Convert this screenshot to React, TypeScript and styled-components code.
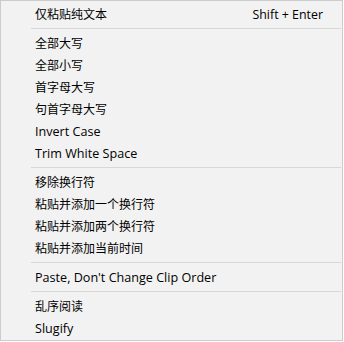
import { createGlobalStyle, styled } from 'styled-components';

const GlobalStyle = createGlobalStyle`
  html, body {
    margin: 0;
    padding: 0;
    background: #ffffff;
  }
  body {
    font-family: "Open Sans", "Noto Sans CJK SC", sans-serif;
  }
`;

type Entry =
  | { kind: 'item'; label: string; shortcut?: string; latin?: boolean }
  | { kind: 'sep' };

const menuData: Entry[] = [
  { kind: 'item', label: '仅粘贴纯文本', shortcut: 'Shift + Enter' },
  { kind: 'sep' },
  { kind: 'item', label: '全部大写' },
  { kind: 'item', label: '全部小写' },
  { kind: 'item', label: '首字母大写' },
  { kind: 'item', label: '句首字母大写' },
  { kind: 'item', label: 'Invert Case', latin: true },
  { kind: 'item', label: 'Trim White Space', latin: true },
  { kind: 'sep' },
  { kind: 'item', label: '移除换行符' },
  { kind: 'item', label: '粘贴并添加一个换行符' },
  { kind: 'item', label: '粘贴并添加两个换行符' },
  { kind: 'item', label: '粘贴并添加当前时间' },
  { kind: 'sep' },
  { kind: 'item', label: "Paste, Don't Change Clip Order", latin: true },
  { kind: 'sep' },
  { kind: 'item', label: '乱序阅读' },
  { kind: 'item', label: 'Slugify', latin: true },
];

export default function App() {
  return (
    <>
      <GlobalStyle />
      <Styled.Menu>
        {menuData.map((entry, i) =>
          entry.kind === 'sep' ? (
            <Styled.Separator key={i} />
          ) : (
            <Styled.Item key={i}>
              <Styled.Label $latin={entry.latin}>{entry.label}</Styled.Label>
              {entry.shortcut && <Styled.Shortcut>{entry.shortcut}</Styled.Shortcut>}
            </Styled.Item>
          )
        )}
      </Styled.Menu>
    </>
  );
}

const Styled = {
  Menu: styled.div`
    box-sizing: border-box;
    width: 343px;
    height: 341px;
    border: 1px solid #cccccc;
    background: #f2f2f2;
    padding: 2px 0 0 0;
    display: flex;
    flex-direction: column;
  `,
  Item: styled.div`
    height: 22px;
    display: flex;
    align-items: center;
    padding: 0 19px 0 34px;
    font-size: 12px;
    color: #000000;
  `,
  Label: styled.span<{ $latin?: boolean }>`
    flex: 1;
    white-space: nowrap;
    font-size: ${p => (p.$latin ? '12.6px' : '12px')};
  `,
  Shortcut: styled.span`
    white-space: nowrap;
    font-size: 12.4px;
  `,
  Separator: styled.div`
    height: 7px;
    margin-left: 30px;
    margin-right: 1px;
    display: flex;
    align-items: center;
    &::after {
      content: '';
      display: block;
      width: 100%;
      height: 1px;
      background: #d7d7d7;
    }
  `,
};
